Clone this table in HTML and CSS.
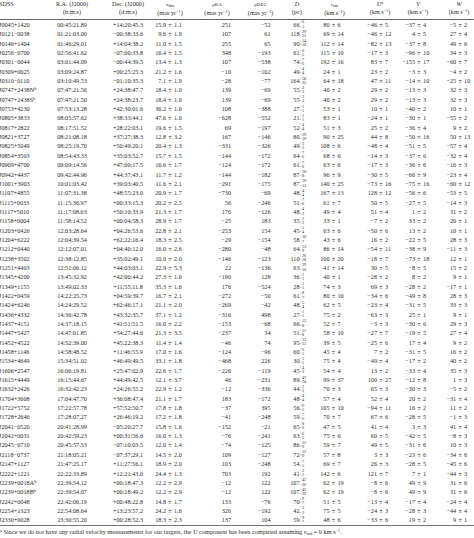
FILE: index.html
```
<!DOCTYPE html>
<html lang="en">
<head>
<meta charset="utf-8">
<title>Kinematics table</title>
<link rel="stylesheet" href="styles.css">
</head>
<body>
<table class="tbl">
<colgroup>
<col class="w45"><col class="w56"><col class="w48"><col class="w18"><col class="w8"><col class="w18"><col class="w50"><col class="w40"><col class="w17"><col class="w12"><col class="w17"><col class="w8"><col class="w19h"><col class="w20"><col class="w8"><col class="w11"><col class="w19"><col class="w8"><col class="w14"><col class="w19"><col class="w8"><col class="w10">
</colgroup>
<thead>
<tr class="hd">
<th class="h-left">SDSS</th>
<th>R.A. (J2000)<br>(h:m:s)</th>
<th class="h-dec">Dec. (J2000)<br>(d:m:s)</th>
<th colspan="3"><i class="sm">π</i><sub class="ix">abs</sub><br>(mas yr<sup class="ex">−1</sup>)</th>
<th><span class="sm"><i>μ</i>RA</span><br>(mas yr<sup class="ex">−1</sup>)</th>
<th class="h-mdec"><span class="sm"><i>μ</i>DEC</span><br>(mas yr<sup class="ex">−1</sup>)</th>
<th colspan="2"><i>D</i><br>(pc)</th>
<th colspan="3"><i class="sm">v</i><sub class="ix">tan</sub><br>(km s<sup class="ex">−1</sup>)</th>
<th colspan="3" class="h-u"><i>U</i><sup class="ex">a</sup><br>(km s<sup class="ex">−1</sup>)</th>
<th colspan="3" class="h-v"><i>V</i><br>(km s<sup class="ex">−1</sup>)</th>
<th colspan="3" class="h-w"><i>W</i><br>(km s<sup class="ex">−1</sup>)</th>
</tr>
</thead>
<tbody>
<tr><td>J0045+1420</td><td>00:45:21.89</td><td>+14:20:45.3</td><td>15.9</td><td>±</td><td>1.1</td><td>251</td><td>−52</td><td>66</td><td class="lim"><span>+6</span><span>−5</span></td><td>80</td><td>±</td><td>6</td><td>−46</td><td>±</td><td>5</td><td>−37</td><td>±</td><td>4</td><td>−5</td><td>±</td><td>2</td></tr>
<tr><td>J0121−0038</td><td>01:21:03.00</td><td>−00:38:33.6</td><td>9.6</td><td>±</td><td>1.9</td><td>107</td><td>61</td><td>118</td><td class="lim"><span>+29</span><span>−21</span></td><td>69</td><td>±</td><td>14</td><td>−46</td><td>±</td><td>12</td><td>4</td><td>±</td><td>5</td><td>27</td><td>±</td><td>4</td></tr>
<tr><td>J0146+1404</td><td>01:46:29.01</td><td>+14:04:38.2</td><td>11.0</td><td>±</td><td>1.5</td><td>255</td><td>65</td><td>90</td><td class="lim"><span>+14</span><span>−10</span></td><td>112</td><td>±</td><td>14</td><td>−82</td><td>±</td><td>13</td><td>−37</td><td>±</td><td>8</td><td>49</td><td>±</td><td>6</td></tr>
<tr><td>J0256−0700</td><td>02:56:41.62</td><td>−07:00:33.8</td><td>16.4</td><td>±</td><td>1.5</td><td>348</td><td>−193</td><td>61</td><td class="lim"><span>+6</span><span>−5</span></td><td>115</td><td>±</td><td>10</td><td>−17</td><td>±</td><td>3</td><td>−96</td><td>±</td><td>10</td><td>34</td><td>±</td><td>3</td></tr>
<tr><td>J0301−0044</td><td>03:01:44.09</td><td>−00:44:39.5</td><td>13.4</td><td>±</td><td>1.3</td><td>107</td><td>−538</td><td>74</td><td class="lim"><span>+7</span><span>−6</span></td><td>192</td><td>±</td><td>16</td><td>83</td><td>±</td><td>7</td><td>−155</td><td>±</td><td>17</td><td>−60</td><td>±</td><td>7</td></tr>
<tr><td>J0309+0025</td><td>03:09:24.87</td><td>+00:25:25.3</td><td>21.2</td><td>±</td><td>1.6</td><td>−10</td><td>−102</td><td>49</td><td class="lim"><span>+4</span><span>−4</span></td><td>24</td><td>±</td><td>1</td><td>23</td><td>±</td><td>2</td><td>−3</td><td>±</td><td>3</td><td>−4</td><td>±</td><td>2</td></tr>
<tr><td>J0310−0110</td><td>03:10:49.53</td><td>−01:10:35.3</td><td>7.1</td><td>±</td><td>1.9</td><td>−28</td><td>−77</td><td>164</td><td class="lim"><span>+58</span><span>−35</span></td><td>64</td><td>±</td><td>18</td><td>47</td><td>±</td><td>11</td><td>−14</td><td>±</td><td>10</td><td>−25</td><td>±</td><td>10</td></tr>
<tr><td>J0747+2438N<sup class="fn">b</sup></td><td>07:47:21.56</td><td>+24:38:47.7</td><td>18.4</td><td>±</td><td>1.0</td><td>139</td><td>−69</td><td>55</td><td class="lim"><span>+3</span><span>−3</span></td><td>40</td><td>±</td><td>2</td><td>29</td><td>±</td><td>2</td><td>−13</td><td>±</td><td>3</td><td>32</td><td>±</td><td>3</td></tr>
<tr><td>J0747+2438S<sup class="fn">b</sup></td><td>07:47:21.50</td><td>+24:38:23.7</td><td>18.4</td><td>±</td><td>1.0</td><td>139</td><td>−69</td><td>55</td><td class="lim"><span>+3</span><span>−3</span></td><td>40</td><td>±</td><td>2</td><td>29</td><td>±</td><td>2</td><td>−13</td><td>±</td><td>3</td><td>32</td><td>±</td><td>3</td></tr>
<tr><td>J0753+4230</td><td>07:53:13.28</td><td>+42:30:01.6</td><td>36.2</td><td>±</td><td>1.0</td><td>108</td><td>−388</td><td>27</td><td class="lim"><span>+1</span><span>−1</span></td><td>53</td><td>±</td><td>1</td><td>10</td><td>±</td><td>1</td><td>−40</td><td>±</td><td>2</td><td>10</td><td>±</td><td>1</td></tr>
<tr><td>J0805+3833</td><td>08:05:57.62</td><td>+38:33:44.1</td><td>47.6</td><td>±</td><td>1.0</td><td>−628</td><td>−552</td><td>21</td><td class="lim"><span>+1</span><span>−1</span></td><td>83</td><td>±</td><td>1</td><td>−24</td><td>±</td><td>1</td><td>−30</td><td>±</td><td>1</td><td>−55</td><td>±</td><td>2</td></tr>
<tr><td>J0817+2822</td><td>08:17:51.52</td><td>+28:22:03.1</td><td>19.6</td><td>±</td><td>1.5</td><td>69</td><td>−197</td><td>52</td><td class="lim"><span>+4</span><span>−4</span></td><td>51</td><td>±</td><td>3</td><td>25</td><td>±</td><td>2</td><td>−36</td><td>±</td><td>4</td><td>9</td><td>±</td><td>2</td></tr>
<tr><td>J0821+3727</td><td>08:21:08.18</td><td>+37:27:38.3</td><td>12.8</td><td>±</td><td>3.2</td><td>167</td><td>−146</td><td>80</td><td class="lim"><span>+29</span><span>−19</span></td><td>90</td><td>±</td><td>25</td><td>44</td><td>±</td><td>8</td><td>−50</td><td>±</td><td>16</td><td>50</td><td>±</td><td>13</td></tr>
<tr><td>J0825+5049</td><td>08:25:19.70</td><td>+50:49:20.1</td><td>20.4</td><td>±</td><td>1.3</td><td>−331</td><td>−326</td><td>49</td><td class="lim"><span>+3</span><span>−3</span></td><td>108</td><td>±</td><td>6</td><td>−48</td><td>±</td><td>4</td><td>−51</td><td>±</td><td>5</td><td>−57</td><td>±</td><td>4</td></tr>
<tr><td>J0854+3503</td><td>08:54:43.33</td><td>+35:03:52.7</td><td>15.7</td><td>±</td><td>1.5</td><td>−144</td><td>−172</td><td>64</td><td class="lim"><span>+7</span><span>−6</span></td><td>68</td><td>±</td><td>6</td><td>−14</td><td>±</td><td>3</td><td>−37</td><td>±</td><td>6</td><td>−32</td><td>±</td><td>4</td></tr>
<tr><td>J0909+4700</td><td>09:09:14.56</td><td>+47:00:17.5</td><td>16.6</td><td>±</td><td>1.7</td><td>−124</td><td>−172</td><td>61</td><td class="lim"><span>+7</span><span>−6</span></td><td>63</td><td>±</td><td>6</td><td>−17</td><td>±</td><td>3</td><td>−36</td><td>±</td><td>6</td><td>−16</td><td>±</td><td>3</td></tr>
<tr><td>J0942+4437</td><td>09:42:44.96</td><td>+44:37:43.1</td><td>11.7</td><td>±</td><td>1.2</td><td>−144</td><td>−182</td><td>87</td><td class="lim"><span>+10</span><span>−8</span></td><td>96</td><td>±</td><td>9</td><td>−30</td><td>±</td><td>5</td><td>−66</td><td>±</td><td>9</td><td>−23</td><td>±</td><td>4</td></tr>
<tr><td>J1001+3903</td><td>10:01:03.42</td><td>+39:03:40.5</td><td>11.6</td><td>±</td><td>2.1</td><td>−291</td><td>−175</td><td>87</td><td class="lim"><span>+19</span><span>−13</span></td><td>140</td><td>±</td><td>25</td><td>−73</td><td>±</td><td>16</td><td>−75</td><td>±</td><td>16</td><td>−60</td><td>±</td><td>12</td></tr>
<tr><td>J1107+4855</td><td>11:07:31.38</td><td>+48:55:23.0</td><td>20.9</td><td>±</td><td>1.7</td><td>−730</td><td>−69</td><td>48</td><td class="lim"><span>+4</span><span>−4</span></td><td>167</td><td>±</td><td>13</td><td>128</td><td>±</td><td>12</td><td>−56</td><td>±</td><td>6</td><td>−53</td><td>±</td><td>5</td></tr>
<tr><td>J1115+0033</td><td>11:15:36.97</td><td>+00:33:15.3</td><td>20.2</td><td>±</td><td>2.5</td><td>56</td><td>−246</td><td>51</td><td class="lim"><span>+7</span><span>−6</span></td><td>61</td><td>±</td><td>7</td><td>50</td><td>±</td><td>5</td><td>−27</td><td>±</td><td>5</td><td>−14</td><td>±</td><td>3</td></tr>
<tr><td>J1117+5010</td><td>11:17:08.63</td><td>+50:10:33.9</td><td>21.3</td><td>±</td><td>1.7</td><td>176</td><td>−126</td><td>48</td><td class="lim"><span>+4</span><span>−3</span></td><td>49</td><td>±</td><td>4</td><td>51</td><td>±</td><td>4</td><td>1</td><td>±</td><td>2</td><td>31</td><td>±</td><td>2</td></tr>
<tr><td>J1158+0004</td><td>11:58:14.52</td><td>+00:04:58.3</td><td>28.9</td><td>±</td><td>1.7</td><td>−25</td><td>183</td><td>35</td><td class="lim"><span>+2</span><span>−2</span></td><td>33</td><td>±</td><td>1</td><td>−7</td><td>±</td><td>2</td><td>33</td><td>±</td><td>2</td><td>20</td><td>±</td><td>1</td></tr>
<tr><td>J1203+0426</td><td>12:03:28.64</td><td>+04:26:53.6</td><td>22.8</td><td>±</td><td>2.1</td><td>−253</td><td>154</td><td>45</td><td class="lim"><span>+5</span><span>−4</span></td><td>63</td><td>±</td><td>6</td><td>−50</td><td>±</td><td>6</td><td>13</td><td>±</td><td>2</td><td>10</td><td>±</td><td>1</td></tr>
<tr><td>J1204+6222</td><td>12:04:39.54</td><td>+62:22:16.4</td><td>18.3</td><td>±</td><td>2.5</td><td>−29</td><td>−154</td><td>58</td><td class="lim"><span>+10</span><span>−7</span></td><td>43</td><td>±</td><td>6</td><td>16</td><td>±</td><td>2</td><td>−22</td><td>±</td><td>5</td><td>28</td><td>±</td><td>3</td></tr>
<tr><td>J1212+0440</td><td>12:12:07.01</td><td>+04:40:12.0</td><td>16.0</td><td>±</td><td>2.6</td><td>−280</td><td>−48</td><td>64</td><td class="lim"><span>+13</span><span>−9</span></td><td>86</td><td>±</td><td>14</td><td>−54</td><td>±</td><td>11</td><td>−38</td><td>±</td><td>9</td><td>−11</td><td>±</td><td>3</td></tr>
<tr><td>J1238+3502</td><td>12:38:12.85</td><td>+35:02:49.1</td><td>10.0</td><td>±</td><td>2.0</td><td>−146</td><td>−123</td><td>110</td><td class="lim"><span>+26</span><span>−18</span></td><td>100</td><td>±</td><td>20</td><td>−18</td><td>±</td><td>7</td><td>−73</td><td>±</td><td>18</td><td>12</td><td>±</td><td>1</td></tr>
<tr><td>J1251+4403</td><td>12:51:06.12</td><td>+44:03:03.1</td><td>22.9</td><td>±</td><td>5.3</td><td>22</td><td>−136</td><td>63</td><td class="lim"><span>+29</span><span>−16</span></td><td>41</td><td>±</td><td>14</td><td>30</td><td>±</td><td>5</td><td>−8</td><td>±</td><td>5</td><td>15</td><td>±</td><td>2</td></tr>
<tr><td>J1345+4200</td><td>13:45:32.92</td><td>+42:00:44.2</td><td>27.3</td><td>±</td><td>1.0</td><td>−190</td><td>128</td><td>36</td><td class="lim"><span>+1</span><span>−1</span></td><td>40</td><td>±</td><td>1</td><td>−28</td><td>±</td><td>2</td><td>8</td><td>±</td><td>2</td><td>9</td><td>±</td><td>1</td></tr>
<tr><td>J1349+1155</td><td>13:49:02.33</td><td>+11:55:11.8</td><td>35.3</td><td>±</td><td>1.6</td><td>176</td><td>−524</td><td>28</td><td class="lim"><span>+1</span><span>−1</span></td><td>74</td><td>±</td><td>3</td><td>69</td><td>±</td><td>3</td><td>−28</td><td>±</td><td>2</td><td>−17</td><td>±</td><td>1</td></tr>
<tr><td>J1422+0459</td><td>14:22:25.73</td><td>+04:59:39.7</td><td>16.7</td><td>±</td><td>2.1</td><td>−272</td><td>−50</td><td>61</td><td class="lim"><span>+8</span><span>−7</span></td><td>80</td><td>±</td><td>10</td><td>−34</td><td>±</td><td>6</td><td>−49</td><td>±</td><td>8</td><td>28</td><td>±</td><td>3</td></tr>
<tr><td>J1424+6246</td><td>14:24:29.52</td><td>+62:46:17.1</td><td>21.1</td><td>±</td><td>2.0</td><td>−269</td><td>−42</td><td>48</td><td class="lim"><span>+5</span><span>−4</span></td><td>62</td><td>±</td><td>5</td><td>−23</td><td>±</td><td>4</td><td>−31</td><td>±</td><td>5</td><td>33</td><td>±</td><td>3</td></tr>
<tr><td>J1436+4332</td><td>14:36:42.78</td><td>+43:32:35.7</td><td>37.1</td><td>±</td><td>1.2</td><td>−316</td><td>498</td><td>27</td><td class="lim"><span>+1</span><span>−1</span></td><td>75</td><td>±</td><td>2</td><td>−63</td><td>±</td><td>3</td><td>25</td><td>±</td><td>1</td><td>9</td><td>±</td><td>1</td></tr>
<tr><td>J1437+4151</td><td>14:37:18.15</td><td>+41:51:51.5</td><td>16.0</td><td>±</td><td>2.2</td><td>−153</td><td>−68</td><td>66</td><td class="lim"><span>+12</span><span>−8</span></td><td>52</td><td>±</td><td>7</td><td>−3</td><td>±</td><td>3</td><td>−30</td><td>±</td><td>6</td><td>29</td><td>±</td><td>3</td></tr>
<tr><td>J1447+5427</td><td>14:47:01.85</td><td>+54:27:44.6</td><td>21.3</td><td>±</td><td>3.5</td><td>−237</td><td>34</td><td>51</td><td class="lim"><span>+11</span><span>−8</span></td><td>58</td><td>±</td><td>10</td><td>−27</td><td>±</td><td>7</td><td>−19</td><td>±</td><td>5</td><td>27</td><td>±</td><td>4</td></tr>
<tr><td>J1452+4522</td><td>14:52:39.00</td><td>+45:22:38.3</td><td>11.4</td><td>±</td><td>1.4</td><td>−46</td><td>74</td><td>95</td><td class="lim"><span>+15</span><span>−11</span></td><td>39</td><td>±</td><td>5</td><td>−25</td><td>±</td><td>6</td><td>17</td><td>±</td><td>4</td><td>9</td><td>±</td><td>2</td></tr>
<tr><td>J1458+1146</td><td>14:58:48.52</td><td>+11:46:55.9</td><td>17.0</td><td>±</td><td>1.6</td><td>−124</td><td>−96</td><td>60</td><td class="lim"><span>+6</span><span>−5</span></td><td>45</td><td>±</td><td>4</td><td>7</td><td>±</td><td>2</td><td>−31</td><td>±</td><td>5</td><td>16</td><td>±</td><td>2</td></tr>
<tr><td>J1534+4649</td><td>15:34:51.02</td><td>+46:49:49.5</td><td>33.1</td><td>±</td><td>1.8</td><td>−468</td><td>226</td><td>30</td><td class="lim"><span>+1</span><span>−1</span></td><td>75</td><td>±</td><td>4</td><td>−49</td><td>±</td><td>4</td><td>−17</td><td>±</td><td>2</td><td>40</td><td>±</td><td>2</td></tr>
<tr><td>J1606+2547</td><td>16:06:19.81</td><td>+25:47:02.9</td><td>22.6</td><td>±</td><td>1.7</td><td>−226</td><td>−119</td><td>45</td><td class="lim"><span>+4</span><span>−3</span></td><td>54</td><td>±</td><td>4</td><td>13</td><td>±</td><td>2</td><td>−33</td><td>±</td><td>4</td><td>35</td><td>±</td><td>3</td></tr>
<tr><td>J1615+4449</td><td>16:15:44.67</td><td>+44:49:42.5</td><td>12.1</td><td>±</td><td>3.7</td><td>46</td><td>−231</td><td>89</td><td class="lim"><span>+47</span><span>−20</span></td><td>99</td><td>±</td><td>37</td><td>100</td><td>±</td><td>27</td><td>−12</td><td>±</td><td>8</td><td>1</td><td>±</td><td>3</td></tr>
<tr><td>J1632+2426</td><td>16:32:42.23</td><td>+24:26:55.2</td><td>22.9</td><td>±</td><td>1.2</td><td>−12</td><td>−336</td><td>44</td><td class="lim"><span>+2</span><span>−2</span></td><td>70</td><td>±</td><td>3</td><td>65</td><td>±</td><td>3</td><td>−30</td><td>±</td><td>3</td><td>−5</td><td>±</td><td>2</td></tr>
<tr><td>J1704+3608</td><td>17:04:47.70</td><td>+36:08:47.4</td><td>21.1</td><td>±</td><td>1.7</td><td>183</td><td>−172</td><td>48</td><td class="lim"><span>+4</span><span>−4</span></td><td>57</td><td>±</td><td>4</td><td>52</td><td>±</td><td>4</td><td>20</td><td>±</td><td>2</td><td>−31</td><td>±</td><td>4</td></tr>
<tr><td>J1722+5752</td><td>17:22:57.78</td><td>+57:52:50.7</td><td>17.8</td><td>±</td><td>1.8</td><td>−37</td><td>395</td><td>56</td><td class="lim"><span>+6</span><span>−5</span></td><td>105</td><td>±</td><td>10</td><td>−94</td><td>±</td><td>11</td><td>16</td><td>±</td><td>2</td><td>11</td><td>±</td><td>2</td></tr>
<tr><td>J1728+2646</td><td>17:28:07.27</td><td>+26:46:19.2</td><td>17.2</td><td>±</td><td>1.8</td><td>−41</td><td>−248</td><td>59</td><td class="lim"><span>+7</span><span>−6</span></td><td>70</td><td>±</td><td>7</td><td>67</td><td>±</td><td>6</td><td>−28</td><td>±</td><td>5</td><td>−1</td><td>±</td><td>3</td></tr>
<tr><td>J2041−0520</td><td>20:41:28.99</td><td>−05:20:27.7</td><td>15.8</td><td>±</td><td>1.6</td><td>−152</td><td>−21</td><td>65</td><td class="lim"><span>+8</span><span>−6</span></td><td>47</td><td>±</td><td>5</td><td>41</td><td>±</td><td>4</td><td>3</td><td>±</td><td>3</td><td>41</td><td>±</td><td>4</td></tr>
<tr><td>J2042+0031</td><td>20:42:59.23</td><td>+00:31:56.6</td><td>16.0</td><td>±</td><td>1.3</td><td>−76</td><td>−241</td><td>63</td><td class="lim"><span>+6</span><span>−5</span></td><td>75</td><td>±</td><td>6</td><td>60</td><td>±</td><td>5</td><td>−42</td><td>±</td><td>5</td><td>−8</td><td>±</td><td>3</td></tr>
<tr><td>J2045−0710</td><td>20:45:57.53</td><td>−07:10:03.5</td><td>12.0</td><td>±</td><td>1.4</td><td>−74</td><td>−125</td><td>86</td><td class="lim"><span>+12</span><span>−9</span></td><td>59</td><td>±</td><td>7</td><td>49</td><td>±</td><td>5</td><td>−31</td><td>±</td><td>6</td><td>10</td><td>±</td><td>3</td></tr>
<tr><td>J2118−0737</td><td>21:18:05.21</td><td>−07:37:29.1</td><td>14.5</td><td>±</td><td>2.0</td><td>109</td><td>−127</td><td>72</td><td class="lim"><span>+12</span><span>−9</span></td><td>57</td><td>±</td><td>8</td><td>3</td><td>±</td><td>3</td><td>−23</td><td>±</td><td>6</td><td>−34</td><td>±</td><td>6</td></tr>
<tr><td>J2147+1127</td><td>21:47:25.17</td><td>+11:27:56.1</td><td>18.9</td><td>±</td><td>2.0</td><td>103</td><td>−248</td><td>54</td><td class="lim"><span>+7</span><span>−5</span></td><td>69</td><td>±</td><td>7</td><td>26</td><td>±</td><td>3</td><td>−28</td><td>±</td><td>5</td><td>−45</td><td>±</td><td>6</td></tr>
<tr><td>J2222+1221</td><td>22:22:33.89</td><td>+12:21:43.0</td><td>24.4</td><td>±</td><td>1.3</td><td>703</td><td>192</td><td>41</td><td class="lim"><span>+2</span><span>−2</span></td><td>142</td><td>±</td><td>6</td><td>121</td><td>±</td><td>7</td><td>7</td><td>±</td><td>1</td><td>−44</td><td>±</td><td>3</td></tr>
<tr><td>J2239+0018A<sup class="fn">b</sup></td><td>22:39:54.12</td><td>+00:18:47.3</td><td>12.2</td><td>±</td><td>2.9</td><td>−12</td><td>122</td><td>107</td><td class="lim"><span>+42</span><span>−26</span></td><td>62</td><td>±</td><td>19</td><td>−8</td><td>±</td><td>6</td><td>49</td><td>±</td><td>9</td><td>31</td><td>±</td><td>6</td></tr>
<tr><td>J2239+0018B<sup class="fn">b</sup></td><td>22:39:54.07</td><td>+00:18:49.2</td><td>12.2</td><td>±</td><td>2.9</td><td>−12</td><td>122</td><td>107</td><td class="lim"><span>+42</span><span>−26</span></td><td>62</td><td>±</td><td>19</td><td>−8</td><td>±</td><td>6</td><td>49</td><td>±</td><td>9</td><td>31</td><td>±</td><td>6</td></tr>
<tr><td>J2242+0048</td><td>22:42:06.19</td><td>+00:48:22.8</td><td>14.8</td><td>±</td><td>1.7</td><td>133</td><td>−76</td><td>70</td><td class="lim"><span>+9</span><span>−7</span></td><td>51</td><td>±</td><td>5</td><td>−13</td><td>±</td><td>4</td><td>−17</td><td>±</td><td>4</td><td>−24</td><td>±</td><td>4</td></tr>
<tr><td>J2254+1323</td><td>22:54:08.64</td><td>+13:23:57.2</td><td>24.2</td><td>±</td><td>1.6</td><td>326</td><td>−192</td><td>42</td><td class="lim"><span>+3</span><span>−3</span></td><td>75</td><td>±</td><td>5</td><td>−24</td><td>±</td><td>3</td><td>−28</td><td>±</td><td>3</td><td>−44</td><td>±</td><td>4</td></tr>
<tr><td>J2330+0028</td><td>23:30:55.20</td><td>+00:28:52.3</td><td>18.3</td><td>±</td><td>2.3</td><td>137</td><td>104</td><td>59</td><td class="lim"><span>+9</span><span>−7</span></td><td>48</td><td>±</td><td>6</td><td>−33</td><td>±</td><td>6</td><td>19</td><td>±</td><td>2</td><td>9</td><td>±</td><td>1</td></tr>
</tbody>
</table>
<p class="note"><sup class="fn">a</sup> Since we do not have any radial velocity measurements for our targets, the <i>U</i> component has been computed assuming <i>v</i><sub class="ix">rad</sub> = 0 km s<sup class="ex">−1</sup>.</p>
</body>
</html>
```

FILE: styles.css
```
html, body {
  margin: 0;
  padding: 0;
  background: #fff;
  overflow: hidden;
}

body {
  width: 474px;
  height: 538px;
  font-family: "Liberation Serif", "Times New Roman", serif;
  font-size: 6.2px;
  color: #2b2b2b;
}

.tbl {
  table-layout: fixed;
  width: 475px;
  margin-left: -1px;
  border-collapse: separate;
  border-spacing: 0;
}

.w45 { width: 45px; }
.w56 { width: 56px; }
.w48 { width: 48px; }
.w18 { width: 18px; }
.w8 { width: 8px; }
.w50 { width: 50px; }
.w40 { width: 40px; }
.w17 { width: 17.5px; }
.w12 { width: 12.5px; }
.w19h { width: 19.5px; }
.w20 { width: 20px; }
.w11 { width: 11px; }
.w19 { width: 19px; }
.w14 { width: 14px; }
.w10 { width: 10px; }

.tbl th,
.tbl td {
  padding: 0;
  white-space: nowrap;
  font-weight: normal;
  overflow: visible;
}

.hd th {
  height: 19px;
  vertical-align: top;
  line-height: 8.4px;
  text-align: center;
  border-bottom: 1.6px solid #666;
}

.hd .h-left { text-align: left; }
.hd .h-dec { padding-left: 8px; }
.hd .h-mdec { padding-right: 3px; }
.hd .h-u { padding-left: 7px; }
.hd .h-v { padding-left: 3px; }
.hd .h-w { padding-left: 7px; }

.sm { font-size: 5px; }

.tbl td {
  height: 9.35px;
  line-height: 9.35px;
  vertical-align: middle;
  text-align: left;
}

.tbl td:nth-child(2),
.tbl td:nth-child(3) { text-align: center; }
.tbl td:nth-child(3) { padding-left: 8px; }

.tbl td:nth-child(4),
.tbl td:nth-child(7),
.tbl td:nth-child(8),
.tbl td:nth-child(9),
.tbl td:nth-child(3n+11) { text-align: right; }

.tbl td:nth-child(5),
.tbl td:nth-child(3n+12) { text-align: center; }

.tbl td:nth-child(7) { padding-right: 11px; }
.tbl td:nth-child(8) { padding-right: 11.5px; }

.lim { padding-left: 0.6px; }
.lim span {
  display: block;
  font-size: 4.3px;
  line-height: 4.2px;
}

.ex {
  font-size: 4.3px;
  vertical-align: 2.3px;
  line-height: 0;
}

.ix {
  font-size: 4.3px;
  vertical-align: -1.2px;
  line-height: 0;
}

.fn {
  font-size: 4.3px;
  vertical-align: 2.3px;
  line-height: 0;
}

.note {
  margin: 0;
  border-top: 0.8px solid #777;
  padding-top: 2.5px;
  line-height: 8px;
  white-space: nowrap;
  font-size: 6.3px;
}
```
